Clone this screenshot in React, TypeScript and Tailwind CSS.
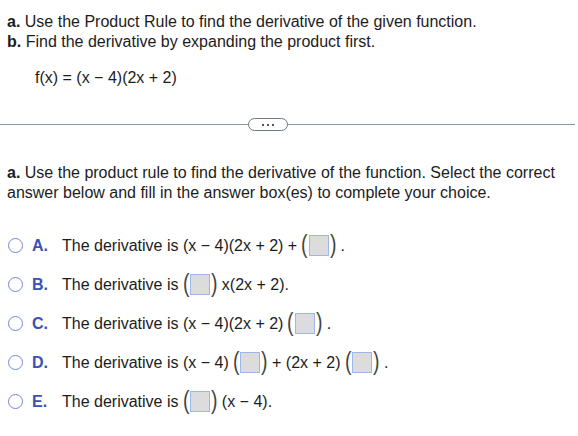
import type { ReactNode } from "react";

function AnswerBox() {
  return (
    <span className="inline-flex items-center mx-[3px] align-middle">
      <span className="text-[26px] leading-none text-[#444] scale-x-75 -mt-[3px]">(</span>
      <span className="inline-block w-[20px] h-[21px] bg-[#dcdcdc] border border-[#9db7e6]" />
      <span className="text-[26px] leading-none text-[#444] scale-x-75 -mt-[3px]">)</span>
    </span>
  );
}

interface OptionProps {
  letter: string;
  children: ReactNode;
}

function Option({ letter, children }: OptionProps) {
  return (
    <div className="flex items-center h-[39px]">
      <span className="ml-[8px] w-[15px] h-[15px] rounded-full border-[1.5px] border-[#7388d6] shrink-0" />
      <span className="ml-[9px] w-[30px] font-bold text-[#3b50b8]">{letter}</span>
      <span className="flex items-center whitespace-nowrap">{children}</span>
    </div>
  );
}

export default function App() {
  return (
    <div className="w-[578px] h-[436px] bg-white text-[#1c1c1c] text-[16px] leading-[20px] font-['Liberation_Sans',Arial,sans-serif] overflow-hidden">
      <div className="pt-[12px] px-[7px]">
        <p>
          <span className="font-bold">a.</span> Use the Product Rule to find the derivative of the given function.
        </p>
        <p>
          <span className="font-bold">b.</span> Find the derivative by expanding the product first.
        </p>
        <p className="mt-[16px] ml-[28px]">f(x) = (x − 4)(2x + 2)</p>
      </div>

      {/* divider */}
      <div className="relative mt-[30px] h-[13px] flex items-center">
        <div className="w-[575px] h-px bg-[#8c949e]" />
        <div className="absolute left-[248px] top-0 w-[40px] h-[13px] rounded-full border border-[#6d7a88] bg-white flex items-center justify-center gap-[3px]">
          <span className="w-[2px] h-[2px] bg-[#4a5663]" />
          <span className="w-[2px] h-[2px] bg-[#4a5663]" />
          <span className="w-[2px] h-[2px] bg-[#4a5663]" />
        </div>
      </div>

      <div className="px-[7px] mt-[32px]">
        <p>
          <span className="font-bold">a.</span> Use the product rule to find the derivative of the function. Select the correct
          <br />
          answer below and fill in the answer box(es) to complete your choice.
        </p>
      </div>

      <div className="mt-[23px]">
        <Option letter="A.">
          The derivative is (x − 4)(2x + 2) + <AnswerBox />.
        </Option>
        <Option letter="B.">
          The derivative is <AnswerBox />x(2x + 2).
        </Option>
        <Option letter="C.">
          The derivative is (x − 4)(2x + 2)<AnswerBox />.
        </Option>
        <Option letter="D.">
          The derivative is (x − 4)<AnswerBox /> + (2x + 2)<AnswerBox />.
        </Option>
        <Option letter="E.">
          The derivative is <AnswerBox />(x − 4).
        </Option>
      </div>
    </div>
  );
}
